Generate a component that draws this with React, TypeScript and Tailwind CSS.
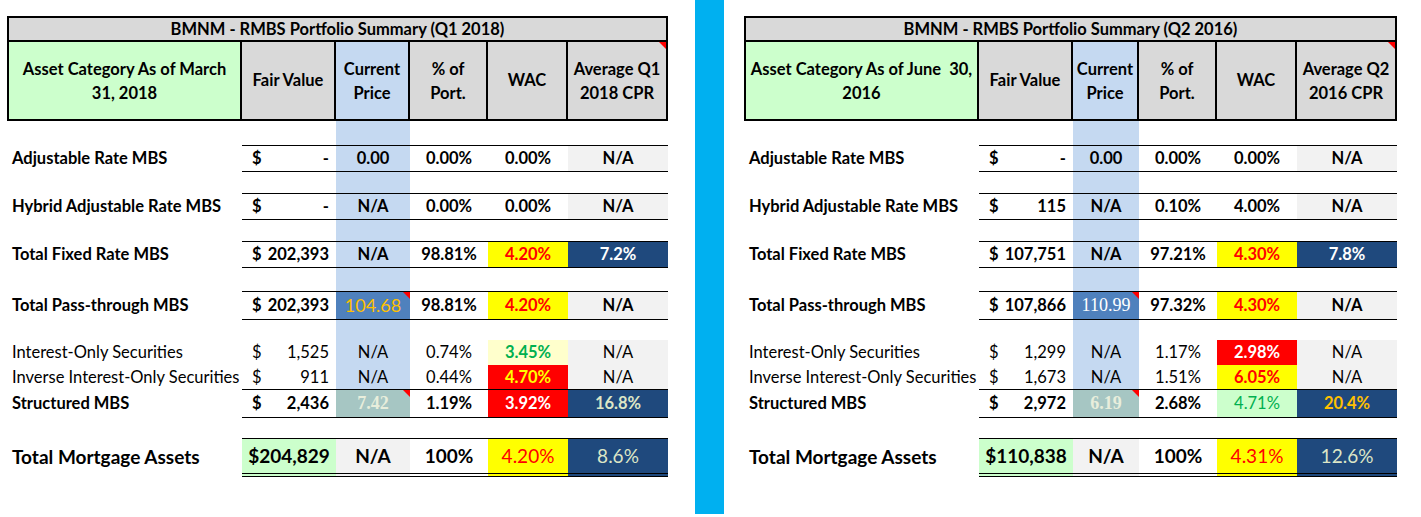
import React from "react"

type Cell = {
  t: string
  bg?: string
  color?: string
  bold?: boolean
  serif?: boolean
  tri?: boolean
  size?: string
}

type RowData = {
  label?: string
  kind: "blank" | "line" | "plain" | "total"
  h: string
  bold?: boolean
  fv?: [string, string] | string
  cells?: Cell[]
}

const NA_BG = "bg-[#f2f2f2]"
const PRICE_BG = "bg-[#c5d9f1]"

function Tri() {
  return (
    <span className="absolute top-0 right-0 w-0 h-0 border-l-[7px] border-l-transparent border-t-[7px] border-t-[#ff0000]" />
  )
}

function Header({ tpl, title, cat, cpr }: { tpl: string; title: string; cat: React.ReactNode; cpr: React.ReactNode }) {
  return (
    <div className="font-bold text-[16.5px] text-black">
      <div className="h-[26px] border-2 border-black bg-[#d9d9d9] flex items-center justify-center">{title}</div>
      <div className={`grid ${tpl} h-[79px]`}>
        <div className="border-2 border-t-0 border-black bg-[#ccffcc] flex items-center justify-center text-center leading-[24px]">
          {cat}
        </div>
        <div className="border-b-2 border-r-2 border-black bg-[#d9d9d9] flex items-center justify-center">Fair Value</div>
        <div className="border-b-2 border-r-2 border-black bg-[#c5d9f1] flex items-center justify-center text-center leading-[24px]">
          Current<br />Price
        </div>
        <div className="border-b-2 border-r-2 border-black bg-[#d9d9d9] flex items-center justify-center text-center leading-[24px]">
          % of<br />Port.
        </div>
        <div className="border-b-2 border-r-2 border-black bg-[#d9d9d9] flex items-center justify-center">WAC</div>
        <div className="relative border-b-2 border-r-2 border-black bg-[#d9d9d9] flex items-center justify-center text-center leading-[24px]">
          {cpr}
          <Tri />
        </div>
      </div>
    </div>
  )
}

function Row({ tpl, r }: { tpl: string; r: RowData }) {
  if (r.kind === "blank") {
    return (
      <div className={`grid ${tpl} ${r.h}`}>
        <div />
        <div />
        <div className={r.cells ? "" : PRICE_BG} />
      </div>
    )
  }
  const line =
    r.kind === "line"
      ? "border-y border-black"
      : r.kind === "total"
      ? "border-t border-b-4 border-double border-black"
      : ""
  const big = r.kind === "total"
  const weight = r.bold ? "font-bold" : "font-normal"
  const size = big ? "text-[19px]" : "text-[16.5px]"
  return (
    <div className={`grid ${tpl} ${r.h} ${size} text-black`}>
      <div className={`flex items-center pl-[5px] whitespace-nowrap ${r.bold ? "font-bold" : ""}`}>{r.label}</div>
      {typeof r.fv === "string" ? (
        <div className={`${line} bg-[#ccffcc] flex items-center justify-center font-bold`}>{r.fv}</div>
      ) : (
        <div className={`${line} flex items-center justify-between pl-[10px] pr-[7px] ${weight}`}>
          <span>{r.fv?.[0]}</span>
          <span>{r.fv?.[1]}</span>
        </div>
      )}
      {r.cells?.map((c, i) => (
        <div
          key={i}
          className={`relative ${line} flex items-center justify-center ${c.bg ?? ""} ${c.color ?? ""} ${
            c.bold ?? r.bold ? "font-bold" : "font-normal"
          } ${c.serif ? "font-['Liberation_Serif',serif] text-[18px]" : ""} ${c.size ?? ""}`}
        >
          {c.t}
          {c.tri && <Tri />}
        </div>
      ))}
    </div>
  )
}

const DARK = "bg-[#1f497d]"
const CREAM = "text-[#dde6c6]"

const leftRows: RowData[] = [
  { kind: "blank", h: "h-[24px]" },
  {
    kind: "line", h: "h-[24px]", bold: true, label: "Adjustable Rate MBS", fv: ["$", "-"],
    cells: [{ t: "0.00", bg: PRICE_BG }, { t: "0.00%" }, { t: "0.00%" }, { t: "N/A", bg: NA_BG }],
  },
  { kind: "blank", h: "h-[24px]" },
  {
    kind: "line", h: "h-[24px]", bold: true, label: "Hybrid Adjustable Rate MBS", fv: ["$", "-"],
    cells: [{ t: "N/A", bg: PRICE_BG }, { t: "0.00%" }, { t: "0.00%" }, { t: "N/A", bg: NA_BG }],
  },
  { kind: "blank", h: "h-[24px]" },
  {
    kind: "line", h: "h-[25px]", bold: true, label: "Total Fixed Rate MBS", fv: ["$", "202,393"],
    cells: [
      { t: "N/A", bg: PRICE_BG },
      { t: "98.81%" },
      { t: "4.20%", bg: "bg-[#ffff00]", color: "text-[#ff0000]" },
      { t: "7.2%", bg: DARK, color: "text-white" },
    ],
  },
  { kind: "blank", h: "h-[25px]" },
  {
    kind: "line", h: "h-[25px]", bold: true, label: "Total Pass-through MBS", fv: ["$", "202,393"],
    cells: [
      { t: "104.68", bg: "bg-[#4f81bd]", color: "text-[#ffc000]", bold: false, tri: true, size: "text-[18px]" },
      { t: "98.81%" },
      { t: "4.20%", bg: "bg-[#ffff00]", color: "text-[#ff0000]" },
      { t: "N/A", bg: NA_BG },
    ],
  },
  { kind: "blank", h: "h-[24px]" },
  {
    kind: "plain", h: "h-[25px]", label: "Interest-Only Securities", fv: ["$", "1,525"],
    cells: [
      { t: "N/A", bg: PRICE_BG },
      { t: "0.74%" },
      { t: "3.45%", bg: "bg-[#ffffcc]", color: "text-[#00b050]", bold: true },
      { t: "N/A", bg: NA_BG },
    ],
  },
  {
    kind: "plain", h: "h-[24px]", label: "Inverse Interest-Only Securities", fv: ["$", "911"],
    cells: [
      { t: "N/A", bg: PRICE_BG },
      { t: "0.44%" },
      { t: "4.70%", bg: "bg-[#ff0000]", color: "text-[#ffff00]", bold: true },
      { t: "N/A", bg: NA_BG },
    ],
  },
  {
    kind: "line", h: "h-[25px]", bold: true, label: "Structured MBS", fv: ["$", "2,436"],
    cells: [
      { t: "7.42", bg: "bg-[#a6c6c3]", color: "text-[#e8eedc]", serif: true, tri: true },
      { t: "1.19%" },
      { t: "3.92%", bg: "bg-[#ff0000]", color: "text-white" },
      { t: "16.8%", bg: DARK, color: CREAM },
    ],
  },
  { kind: "blank", h: "h-[24px]", cells: [] },
  {
    kind: "total", h: "h-[39px]", bold: true, label: "Total Mortgage Assets", fv: "$204,829",
    cells: [
      { t: "N/A", bg: NA_BG },
      { t: "100%" },
      { t: "4.20%", bg: "bg-[#ffff00]", color: "text-[#ff0000]", bold: false },
      { t: "8.6%", bg: DARK, color: CREAM, bold: false },
    ],
  },
]

const rightRows: RowData[] = [
  { kind: "blank", h: "h-[24px]" },
  {
    kind: "line", h: "h-[24px]", bold: true, label: "Adjustable Rate MBS", fv: ["$", "-"],
    cells: [{ t: "0.00", bg: PRICE_BG }, { t: "0.00%" }, { t: "0.00%" }, { t: "N/A", bg: NA_BG }],
  },
  { kind: "blank", h: "h-[24px]" },
  {
    kind: "line", h: "h-[24px]", bold: true, label: "Hybrid Adjustable Rate MBS", fv: ["$", "115"],
    cells: [{ t: "N/A", bg: PRICE_BG }, { t: "0.10%" }, { t: "4.00%" }, { t: "N/A", bg: NA_BG }],
  },
  { kind: "blank", h: "h-[24px]" },
  {
    kind: "line", h: "h-[25px]", bold: true, label: "Total Fixed Rate MBS", fv: ["$", "107,751"],
    cells: [
      { t: "N/A", bg: PRICE_BG },
      { t: "97.21%" },
      { t: "4.30%", bg: "bg-[#ffff00]", color: "text-[#ff0000]" },
      { t: "7.8%", bg: DARK, color: "text-white" },
    ],
  },
  { kind: "blank", h: "h-[25px]" },
  {
    kind: "line", h: "h-[25px]", bold: true, label: "Total Pass-through MBS", fv: ["$", "107,866"],
    cells: [
      { t: "110.99", bg: "bg-[#4f81bd]", color: "text-white", bold: false, serif: true, tri: true },
      { t: "97.32%" },
      { t: "4.30%", bg: "bg-[#ffff00]", color: "text-[#ff0000]" },
      { t: "N/A", bg: NA_BG },
    ],
  },
  { kind: "blank", h: "h-[24px]" },
  {
    kind: "plain", h: "h-[25px]", label: "Interest-Only Securities", fv: ["$", "1,299"],
    cells: [
      { t: "N/A", bg: PRICE_BG },
      { t: "1.17%" },
      { t: "2.98%", bg: "bg-[#ff0000]", color: "text-white", bold: true },
      { t: "N/A", bg: NA_BG },
    ],
  },
  {
    kind: "plain", h: "h-[24px]", label: "Inverse Interest-Only Securities", fv: ["$", "1,673"],
    cells: [
      { t: "N/A", bg: PRICE_BG },
      { t: "1.51%" },
      { t: "6.05%", bg: "bg-[#ffff00]", color: "text-[#ff0000]", bold: true },
      { t: "N/A", bg: NA_BG },
    ],
  },
  {
    kind: "line", h: "h-[25px]", bold: true, label: "Structured MBS", fv: ["$", "2,972"],
    cells: [
      { t: "6.19", bg: "bg-[#a6c6c3]", color: "text-[#e8eedc]", serif: true, tri: true },
      { t: "2.68%" },
      { t: "4.71%", bg: "bg-[#ccffcc]", color: "text-[#00b050]", bold: false },
      { t: "20.4%", bg: DARK, color: "text-[#ffc000]" },
    ],
  },
  { kind: "blank", h: "h-[24px]", cells: [] },
  {
    kind: "total", h: "h-[39px]", bold: true, label: "Total Mortgage Assets", fv: "$110,838",
    cells: [
      { t: "N/A", bg: NA_BG },
      { t: "100%" },
      { t: "4.31%", bg: "bg-[#ffff00]", color: "text-[#ff0000]", bold: false },
      { t: "12.6%", bg: DARK, color: CREAM, bold: false },
    ],
  },
]

function Table({ tpl, title, cat, cpr, rows }: { tpl: string; title: string; cat: React.ReactNode; cpr: React.ReactNode; rows: RowData[] }) {
  return (
    <div className="w-fit">
      <Header tpl={tpl} title={title} cat={cat} cpr={cpr} />
      {rows.map((r, i) => (
        <Row key={i} tpl={tpl} r={r} />
      ))}
    </div>
  )
}

export default function App() {
  return (
    <div className="flex h-[517px] w-[1421px] bg-white font-['Lato','Open_Sans',sans-serif] text-black">
      <div className="w-[695px] pl-[7px] pt-[16px]">
        <Table
          tpl="grid-cols-[235px_94px_74px_78px_80px_100px]"
          title="BMNM - RMBS Portfolio Summary (Q1 2018)"
          cat={<>Asset Category As of March<br />31, 2018</>}
          cpr={<>Average Q1<br />2018 CPR</>}
          rows={leftRows}
        />
      </div>
      <div className="w-[29px] h-[514px] bg-[#00b0f0]" />
      <div className="pl-[20px] pt-[16px]">
        <Table
          tpl="grid-cols-[235px_94px_66px_78px_80px_100px]"
          title="BMNM - RMBS Portfolio Summary (Q2 2016)"
          cat={<>Asset Category As of June&nbsp; 30,<br />2016</>}
          cpr={<>Average Q2<br />2016 CPR</>}
          rows={rightRows}
        />
      </div>
    </div>
  )
}
